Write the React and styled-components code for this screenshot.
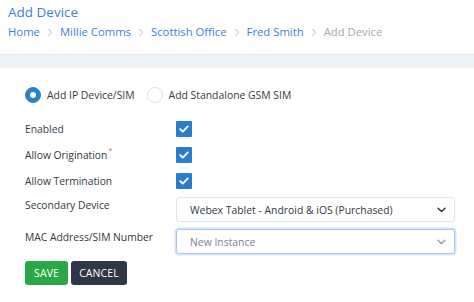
import React from "react";
import styled, { createGlobalStyle } from "styled-components";

const Global = createGlobalStyle`
  html, body { margin: 0; padding: 0; background: #fff; }
  body { font-family: "Open Sans", "Liberation Sans", sans-serif; color: #333a44; }
  * { box-sizing: border-box; }
`;

const Page = styled.div`
  width: 474px;
  height: 302px;
  overflow: hidden;
  background: #fff;
`;

const Header = styled.div`
  padding: 3px 8px 0 8px;
  height: 54px;
`;

const Title = styled.div`
  font-size: 13.5px;
  line-height: 18px;
  color: #3d7fd8;
`;

const Crumbs = styled.div`
  display: flex;
  align-items: center;
  gap: 7px;
  margin-top: 3px;
  font-size: 11.3px;
  line-height: 16px;
`;

const Crumb = styled.span`
  color: ${(p) => (p.$current ? "#a4a9b0" : "#3d7fd8")};
`;

const Sep = styled.svg`
  width: 6px;
  height: 9px;
  flex: none;
`;

const Band = styled.div`
  height: 14px;
  background: #edf3f6;
  border-top: 1px solid #e4ebef;
`;

const Form = styled.div`
  padding: 19px 0 0 25px;
`;

const RadioRow = styled.div`
  display: flex;
  align-items: center;
  height: 16px;
  margin-bottom: 13px;
`;

const RadioOpt = styled.label`
  display: flex;
  align-items: center;
  gap: 6px;
  font-size: 10.4px;
  color: #333a44;
  margin-right: ${(p) => p.$mr || 0}px;
`;

const RadioDot = styled.span`
  width: 16px;
  height: 16px;
  border-radius: 50%;
  flex: none;
  position: relative;
  background: ${(p) => (p.$on ? "#2b7fcb" : "#fff")};
  border: 1px solid ${(p) => (p.$on ? "#2b7fcb" : "#dde2e6")};
  &::after {
    content: "";
    display: ${(p) => (p.$on ? "block" : "none")};
    position: absolute;
    left: 4px;
    top: 4px;
    width: 6px;
    height: 6px;
    border-radius: 50%;
    background: #fff;
  }
`;

const Row = styled.div`
  display: flex;
  align-items: ${(p) => (p.$top ? "flex-start" : "center")};
  height: ${(p) => p.$h}px;
  margin-bottom: ${(p) => p.$mb || 0}px;
`;

const Label = styled.div`
  width: 151px;
  flex: none;
  font-size: 10.3px;
  line-height: 16px;
  color: #333a44;
  padding-top: ${(p) => p.$pt || 0}px;
`;

const Req = styled.sup`
  color: #e05a5a;
  font-size: 7px;
  vertical-align: top;
  line-height: 8px;
  margin-left: 1px;
`;

const Check = styled.span`
  width: 16px;
  height: 16px;
  background: #2b7ccb;
  border-radius: 1px;
  display: flex;
  align-items: center;
  justify-content: center;
`;

const Select = styled.div`
  width: 279px;
  height: 25px;
  display: flex;
  align-items: center;
  justify-content: space-between;
  padding: 0 8px 0 13px;
  border: 1px solid ${(p) => (p.$focus ? "#a9c9ee" : "#e2e6ea")};
  border-radius: 3px;
  box-shadow: ${(p) => (p.$focus ? "0 0 0 1.5px #d3e4f8" : "none")};
  font-size: 10.4px;
  color: ${(p) => (p.$placeholder ? "#7d838a" : "#333a44")};
  background: #fff;
`;

const Buttons = styled.div`
  display: flex;
  gap: 3px;
  margin-top: 7px;
`;

const Button = styled.button`
  height: 24px;
  width: ${(p) => p.$w}px;
  border: none;
  border-radius: 3px;
  background: ${(p) => p.$bg};
  color: #fff;
  font-family: inherit;
  font-size: 10.5px;
  font-weight: 500;
  padding: 0;
  letter-spacing: 0.1px;
`;

const Chevron = ({ color = "#333" }) => (
  <svg width="9" height="6" viewBox="0 0 9 6">
    <path d="M1 1.2 L4.5 4.5 L8 1.2" fill="none" stroke={color} strokeWidth="1.5" strokeLinecap="round" strokeLinejoin="round" />
  </svg>
);

const Tick = () => (
  <svg width="10" height="8" viewBox="0 0 10 8">
    <path d="M1.2 4.2 L3.8 6.6 L8.8 1.4" fill="none" stroke="#fff" strokeWidth="1.8" strokeLinecap="round" strokeLinejoin="round" />
  </svg>
);

const Separator = () => (
  <Sep viewBox="0 0 6 9">
    <path d="M1.5 1 L4.5 4.5 L1.5 8" fill="none" stroke="#b5bac0" strokeWidth="1" />
  </Sep>
);

export default function App() {
  const crumbs = ["Home", "Millie Comms", "Scottish Office", "Fred Smith"];
  return (
    <Page>
      <Global />
      <Header>
        <Title>Add Device</Title>
        <Crumbs>
          {crumbs.map((c) => (
            <React.Fragment key={c}>
              <Crumb>{c}</Crumb>
              <Separator />
            </React.Fragment>
          ))}
          <Crumb $current>Add Device</Crumb>
        </Crumbs>
      </Header>
      <Band />
      <Form>
        <RadioRow>
          <RadioOpt $mr={12}>
            <RadioDot $on />
            Add IP Device/SIM
          </RadioOpt>
          <RadioOpt>
            <RadioDot />
            Add Standalone GSM SIM
          </RadioOpt>
        </RadioRow>
        <Row $h={26}>
          <Label>Enabled</Label>
          <Check><Tick /></Check>
        </Row>
        <Row $h={26}>
          <Label>
            Allow Origination<Req>*</Req>
          </Label>
          <Check><Tick /></Check>
        </Row>
        <Row $h={26} $mb={3}>
          <Label>Allow Termination</Label>
          <Check><Tick /></Check>
        </Row>
        <Row $top $h={25} $mb={7}>
          <Label $pt={0}>Secondary Device</Label>
          <Select>
            <span>Webex Tablet - Android &amp; iOS (Purchased)</span>
            <Chevron color="#333a44" />
          </Select>
        </Row>
        <Row $top $h={25}>
          <Label $pt={0}>MAC Address/SIM Number</Label>
          <Select $focus $placeholder>
            <span>New Instance</span>
            <Chevron color="#9aa0a6" />
          </Select>
        </Row>
        <Buttons>
          <Button $w={43} $bg="#29a847">SAVE</Button>
          <Button $w={56} $bg="#2c3847">CANCEL</Button>
        </Buttons>
      </Form>
    </Page>
  );
}
